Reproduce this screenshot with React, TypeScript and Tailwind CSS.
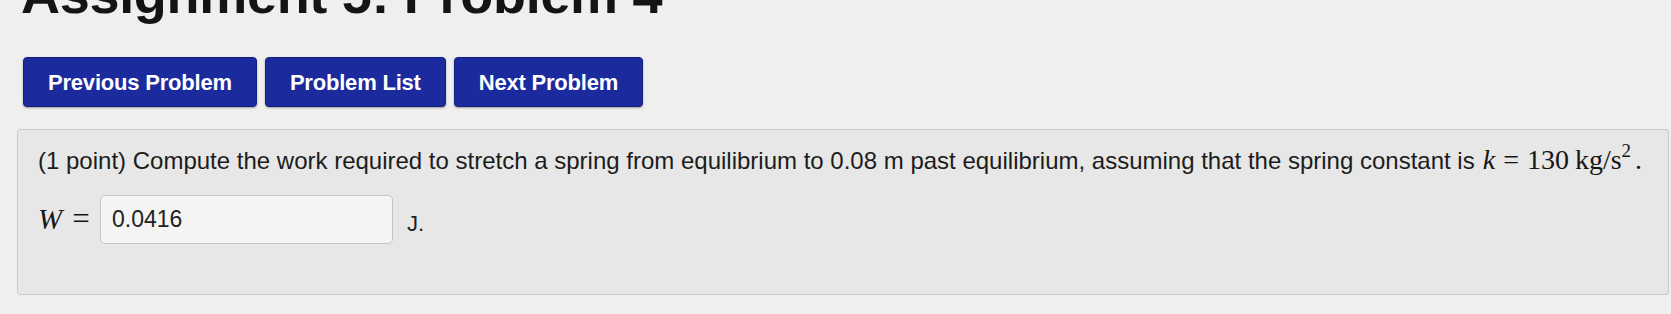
import React from "react";

const sans = { fontFamily: '"Liberation Sans", Arial, sans-serif' };
const serif = { fontFamily: '"Liberation Serif", "Times New Roman", serif' };

function NavButton({ label }: { label: string }) {
  return (
    <button
      className="h-[50px] px-[24px] rounded-[4px] bg-[#1b2b9e] border border-[#15217e] text-white text-[22px] font-bold tracking-[-0.2px] shadow-[0_1px_2px_rgba(0,0,0,0.35)] flex items-center"
      style={sans}
    >
      {label}
    </button>
  );
}

export default function App() {
  return (
    <div
      className="w-[1671px] h-[314px] overflow-hidden bg-[#efefef] pl-[17px] pr-[2px] text-[#1d1d1d]"
      style={sans}
    >
      <h1 className="ml-[4px] mt-[-33px] text-[54px] leading-none font-bold text-[#141414] tracking-[-0.3px]">
        Assignment 5: Problem 4
      </h1>
      <div className="ml-[6px] mt-[36px] flex gap-[8px]">
        <NavButton label="Previous Problem" />
        <NavButton label="Problem List" />
        <NavButton label="Next Problem" />
      </div>
      <div className="mt-[22px] h-[166px] rounded-[3px] border border-[#c9c9c9] bg-[#e7e7e7] pl-[20px] pt-[14px]">
        <div className="h-[32px] leading-[32px] text-[24px] text-[#1c1c1c] whitespace-nowrap flex items-baseline">
          <span>
            (1 point) Compute the work required to stretch a spring from
            equilibrium to 0.08 m past equilibrium, assuming that the spring
            constant is
          </span>
          <span className="ml-[8px] text-[28px] text-[#151515]" style={serif}>
            <i>k</i>
            <span className="mx-[8px]">=</span>
            <span>130</span>
            <span className="ml-[6px]">kg/s</span>
            <span className="text-[19px] relative top-[-12px]">2</span>
            <span className="ml-[4px]">.</span>
          </span>
        </div>
        <div className="mt-[19px] flex items-center">
          <span className="text-[29px] text-[#151515] w-[62px] flex items-baseline" style={serif}>
            <i className="mr-[10px]">W</i>
            <span className="text-[31px]">=</span>
          </span>
          <div className="w-[293px] h-[49px] rounded-[5px] border border-[#c4c4c4] bg-[#f4f4f4] flex items-center pl-[11px] text-[23px] text-[#222]">
            0.0416
          </div>
          <span className="ml-[14px] mt-[8px] text-[22px] text-[#222]">J.</span>
        </div>
      </div>
    </div>
  );
}
